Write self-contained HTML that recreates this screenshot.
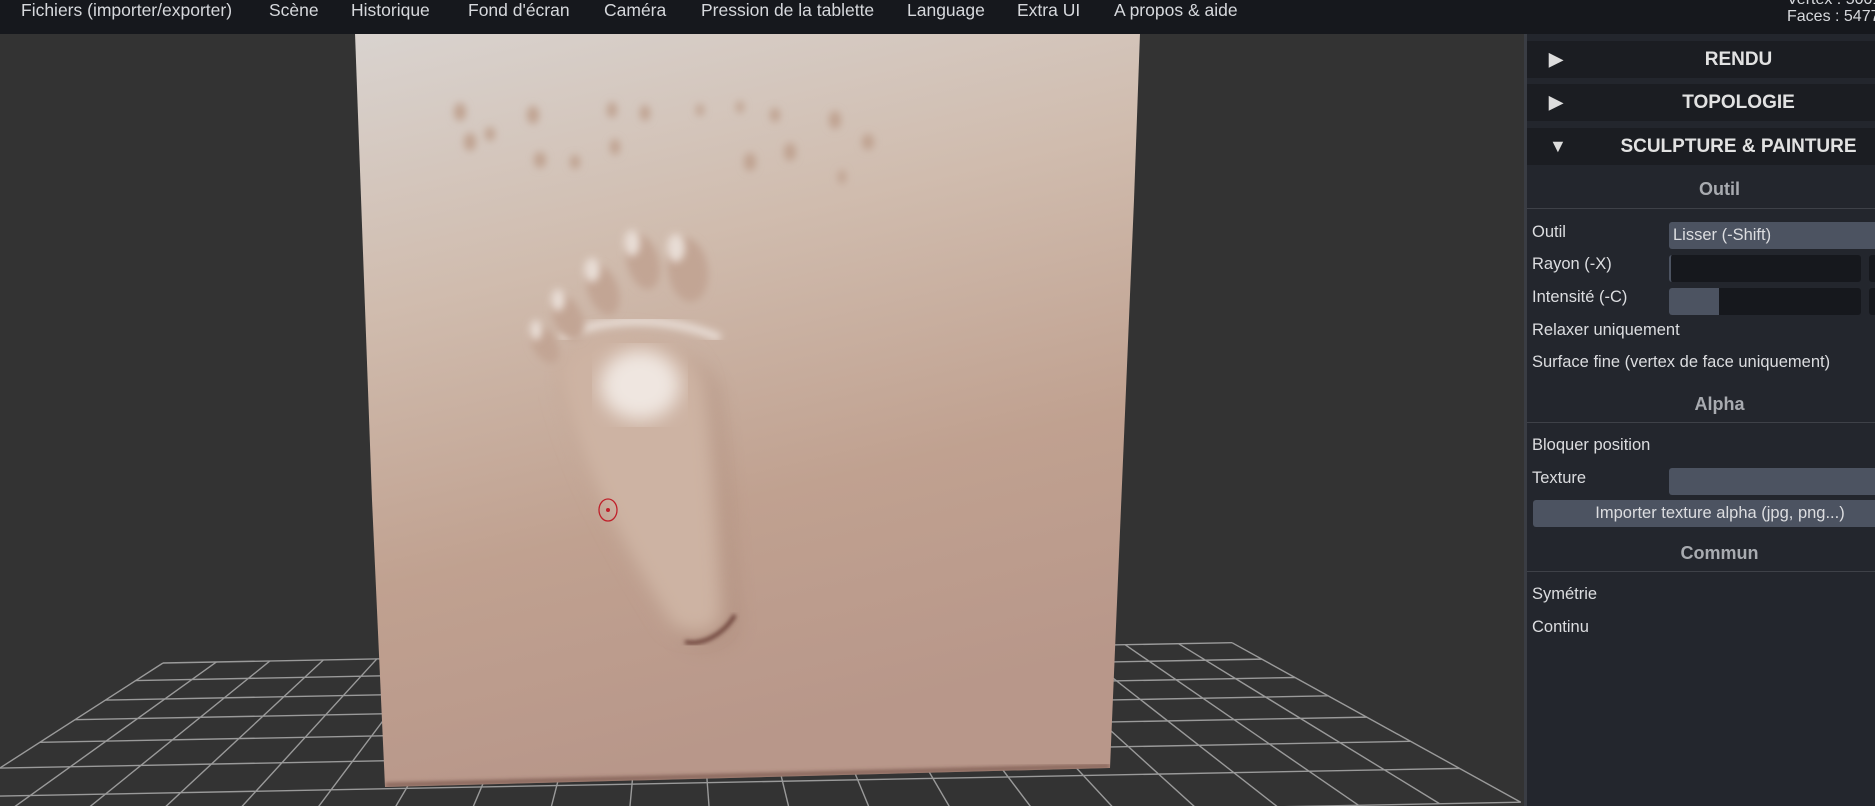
<!DOCTYPE html>
<html><head><meta charset="utf-8"><style>
*{margin:0;padding:0;box-sizing:border-box}
body{width:1875px;height:806px;overflow:hidden;background:#333333;font-family:"Liberation Sans",sans-serif;position:relative}
#top{position:absolute;left:0;top:0;width:1875px;height:34px;background:#16181d}
.m{position:absolute;top:0;font-family:"Liberation Sans Narrow","Liberation Sans",sans-serif;font-size:17.5px;color:#d6d8dc;line-height:20px;white-space:nowrap}
#panel{position:absolute;left:1524px;top:34px;width:351px;height:772px;background:#23262d;border-left:3px solid #3a3d44}
.h{position:absolute;left:0;width:351px;height:37px;background:#1b1d22;color:#e2e2e2;font-weight:bold;font-size:19px;line-height:37px;text-align:center;padding-left:72px}
.h .t{position:absolute;left:22px;top:0;font-size:18px;color:#ddd}
.sec{position:absolute;left:0;width:351px;text-align:center;color:#a8abb0;font-size:18px;font-weight:bold;padding-left:34px}
.hr{position:absolute;left:0;width:351px;height:1px;background:#3e4148}
.l{position:absolute;left:5px;color:#dcdde0;font-size:16.5px;white-space:nowrap}
.box{position:absolute;border-radius:3px}
</style></head><body>
<svg id="vp" width="1524" height="806" style="position:absolute;left:0;top:0">
<defs>
<linearGradient id="cg" x1="0" y1="0" x2="0.25" y2="1">
<stop offset="0" stop-color="#d9d3cf"/><stop offset="0.35" stop-color="#d0bcae"/><stop offset="0.7" stop-color="#c0a190"/><stop offset="1" stop-color="#b8978a"/></linearGradient>
<filter id="b4"><feGaussianBlur stdDeviation="4"/></filter>
<filter id="b8"><feGaussianBlur stdDeviation="9"/></filter>
<filter id="b2"><feGaussianBlur stdDeviation="2"/></filter>
<clipPath id="cc"><polygon points="355,33 1140,33 1110,768 385,787"/></clipPath>
</defs>
<g id="grid" stroke="#9a9a9a" stroke-width="1.4" fill="none"></g>
<polygon points="355,33 1140,33 1134,200 1110,768 385,787 372,500" fill="url(#cg)"/>
<g clip-path="url(#cc)">
<path d="M385,785 L1110,766" stroke="#6d4a40" stroke-width="3" filter="url(#b2)"/>
<path d="M560,380 C560,330 700,330 720,390 C730,470 735,560 740,620 C745,650 700,660 680,640 C640,580 580,480 560,380Z" fill="#ab8a79" filter="url(#b8)" opacity="0.45"/>
<path d="M555,375 C555,320 690,315 705,385 C715,460 720,560 722,610 C724,635 690,640 670,625 C630,560 575,470 555,375Z" fill="#cdb3a3" filter="url(#b8)"/>
<ellipse cx="640" cy="385" rx="40" ry="35" fill="#efe6e0" filter="url(#b8)"/>
<path d="M685,642 C705,646 725,632 735,615" stroke="#6a4038" stroke-width="4" fill="none" filter="url(#b2)"/>
<path d="M560,338 C600,318 660,313 720,338" stroke="#e8ddd6" stroke-width="8" fill="none" filter="url(#b4)"/>
<g fill="#c2a594" filter="url(#b4)">
<ellipse cx="688" cy="270" rx="20" ry="32" transform="rotate(-8 688 270)"/>
<ellipse cx="643" cy="262" rx="16" ry="28" transform="rotate(-15 643 262)"/>
<ellipse cx="603" cy="290" rx="15" ry="26" transform="rotate(-20 603 290)"/>
<ellipse cx="568" cy="318" rx="14" ry="24" transform="rotate(-25 568 318)"/>
<ellipse cx="545" cy="345" rx="12" ry="20" transform="rotate(-30 545 345)"/>
</g>
<g fill="#e8ddd5" filter="url(#b4)">
<ellipse cx="676" cy="248" rx="9" ry="14"/><ellipse cx="632" cy="243" rx="8" ry="13"/><ellipse cx="592" cy="270" rx="8" ry="12"/><ellipse cx="558" cy="300" rx="7" ry="11"/><ellipse cx="536" cy="330" rx="6" ry="10"/>
</g>
<g fill="#bfa290" filter="url(#b4)">
<ellipse cx="460" cy="112" rx="6" ry="9"/><ellipse cx="533" cy="115" rx="6" ry="9"/><ellipse cx="612" cy="110" rx="5" ry="8"/><ellipse cx="645" cy="113" rx="5" ry="8"/><ellipse cx="700" cy="110" rx="4" ry="6"/><ellipse cx="740" cy="107" rx="4" ry="6"/><ellipse cx="775" cy="115" rx="5" ry="7"/><ellipse cx="835" cy="120" rx="6" ry="9"/><ellipse cx="868" cy="142" rx="6" ry="8"/>
<ellipse cx="470" cy="142" rx="6" ry="9"/><ellipse cx="490" cy="134" rx="5" ry="7"/><ellipse cx="540" cy="160" rx="6" ry="8"/><ellipse cx="575" cy="162" rx="5" ry="7"/><ellipse cx="615" cy="147" rx="5" ry="8"/><ellipse cx="750" cy="162" rx="6" ry="9"/><ellipse cx="790" cy="152" rx="6" ry="9"/><ellipse cx="842" cy="177" rx="4" ry="7"/>
</g>
</g>
<ellipse cx="608" cy="510" rx="9" ry="11" fill="none" stroke="#c0202a" stroke-width="1.3"/>
<circle cx="608" cy="510" r="2" fill="#c0202a"/>
</svg>
<div id="top">
<span class="m" style="left:21px;top:0px">Fichiers (importer/exporter)</span>
<span class="m" style="left:269px">Scène</span>
<span class="m" style="left:351px">Historique</span>
<span class="m" style="left:468px">Fond d'écran</span>
<span class="m" style="left:604px">Caméra</span>
<span class="m" style="left:701px">Pression de la tablette</span>
<span class="m" style="left:907px">Language</span>
<span class="m" style="left:1017px">Extra UI</span>
<span class="m" style="left:1114px">A propos &amp; aide</span>
<span class="m" style="left:1787px;top:-10px;font-family:'Liberation Sans',sans-serif;font-size:16px">Vertex : 5001</span>
<span class="m" style="left:1787px;top:7px;font-family:'Liberation Sans',sans-serif;font-size:16px">Faces : 5477</span>
</div>
<div id="panel">
<div class="h" style="top:7px"><span class="t">&#9654;</span>RENDU</div>
<div class="h" style="top:50px"><span class="t">&#9654;</span>TOPOLOGIE</div>
<div class="h" style="top:94px"><span class="t">&#9660;</span>SCULPTURE &amp; PAINTURE</div>
<div class="sec" style="top:145px">Outil</div>
<div class="hr" style="top:174px"></div>
<div class="l" style="top:189px">Outil</div>
<div class="box" style="left:142px;top:188px;width:220px;height:27px;background:#4c5361;color:#dcdde0;font-size:16.5px;line-height:27px;padding-left:4px">Lisser (-Shift)</div>
<div class="l" style="top:221px">Rayon (-X)</div>
<div class="box" style="left:142px;top:221px;width:192px;height:27px;background:#16181d;border-left:2px solid #4c5361"></div>
<div class="box" style="left:342px;top:221px;width:20px;height:27px;background:#16181d"></div>
<div class="l" style="top:254px">Intensité (-C)</div>
<div class="box" style="left:142px;top:254px;width:192px;height:27px;background:#16181d;overflow:hidden"><div style="width:50px;height:27px;background:#4c5361"></div></div>
<div class="box" style="left:342px;top:254px;width:20px;height:27px;background:#16181d"></div>
<div class="l" style="top:287px">Relaxer uniquement</div>
<div class="l" style="top:319px">Surface fine (vertex de face uniquement)</div>
<div class="sec" style="top:360px">Alpha</div>
<div class="hr" style="top:388px"></div>
<div class="l" style="top:402px">Bloquer position</div>
<div class="l" style="top:435px">Texture</div>
<div class="box" style="left:142px;top:434px;width:220px;height:27px;background:#4c5361"></div>
<div class="box" style="left:6px;top:466px;width:350px;height:27px;background:#4c5361;color:#dcdde0;font-size:16.5px;line-height:27px;text-align:center;padding-left:24px">Importer texture alpha (jpg, png...)</div>
<div class="sec" style="top:509px">Commun</div>
<div class="hr" style="top:537px"></div>
<div class="l" style="top:551px">Symétrie</div>
<div class="l" style="top:584px">Continu</div>
</div>
<script>
var g=document.getElementById('grid'),s='';
var d=[0,17,36,55,77,102,130,165];
var cols=20;
function P(i,r){var dd=d[r];var lx=163-1.6*dd,rx=1232+1.75*dd;var x=lx+(rx-lx)*i/cols;var y=663+dd-(x-163)*0.019;return [x,y];}
for(var r=0;r<d.length;r++){var a=P(0,r),b=P(cols,r);s+='<line x1="'+a[0]+'" y1="'+a[1]+'" x2="'+b[0]+'" y2="'+b[1]+'"/>';}
for(var i=0;i<=cols;i++){var a=P(i,0),b=P(i,d.length-1);s+='<line x1="'+a[0]+'" y1="'+a[1]+'" x2="'+b[0]+'" y2="'+b[1]+'"/>';}
g.innerHTML=s;
</script>
</body></html>
